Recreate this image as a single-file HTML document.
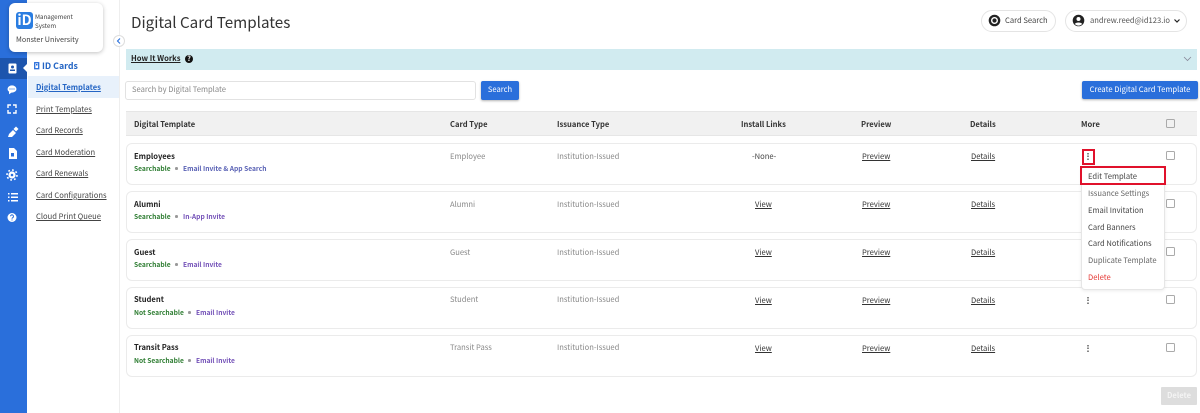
<!DOCTYPE html>
<html><head><meta charset="utf-8">
<style>
html,body{margin:0;padding:0;background:#fff}
#p{position:relative;width:1200px;height:413px;overflow:hidden;background:#fff;font-family:"Noto Sans CJK JP","Liberation Sans",sans-serif;font-size:7.6px;color:#333}
#p div,#p a,#p svg{position:absolute}
.t{white-space:nowrap;line-height:14px}
.nav{left:36px;font-size:7.6px;color:#444;text-decoration:underline}
.row{left:126px;width:1069px;height:40px;border:1px solid #ebebeb;border-radius:6px;background:#fff}
.h{font-weight:bold;color:#333;font-size:7.6px}
.name{left:134px;font-weight:bold;color:#222;font-size:7.6px}
.g{color:#888;font-size:7.6px}
.u{color:#333;text-decoration:underline;font-size:7.6px}
.t.s{font-weight:bold;font-size:6.65px;color:#2e7d32;left:134px;line-height:12px}
.t.i{font-weight:bold;font-size:6.65px;color:#7452b8;line-height:12px}
.d{width:2.5px;height:2.5px;border-radius:50%;background:#999}
.cb{left:1166px;width:7px;height:7px;border:1.2px solid #aaa;border-radius:1.5px;background:#fff}
.m{left:1088px;font-size:7.6px;color:#444}
.v{left:1087px;width:2px;height:7px;background:repeating-linear-gradient(#888 0 1.5px,transparent 1.5px 2.7px)}
</style></head><body><div id="p">

<div style="left:0;top:0;width:27px;height:413px;background:#2a6fdb"></div>
<div style="left:0;top:58px;width:27px;height:21px;background:#1d55ad"></div>
<div style="left:23px;top:63px;width:0;height:0;border:5px solid transparent;border-right:5px solid #fff;border-left:0"></div>
<div style="left:119px;top:0;width:1px;height:413px;background:#eee"></div>
<div style="left:28px;top:76px;width:91px;height:22px;background:#e8f1fb"></div>

<!-- logo card -->
<div style="left:9px;top:3px;width:94px;height:49px;background:#fff;border-radius:6px;box-shadow:0 1px 4px rgba(0,0,0,.25)"></div>
<div style="left:16px;top:12px;width:17px;height:17px;background:#2a7de1;border-radius:3px"></div>
<div class="t" style="left:16px;top:12px;width:17px;height:17px;line-height:17px;text-align:center;color:#fff;font-weight:bold;font-size:14px">iD</div>
<div class="t" style="left:35px;top:12px;font-size:6.2px;line-height:9px;color:#444">Management<br>System</div>
<div class="t" style="left:16px;top:33px;font-size:7.2px;color:#444">Monster University</div>
<div style="left:113px;top:35px;width:10px;height:10px;background:#fff;border:1px solid #ddd;border-radius:50%"></div>
<svg style="left:113px;top:35px" width="12" height="12" viewBox="0 0 12 12"><path d="M7 3.5 4.5 6 7 8.5" fill="none" stroke="#2a6fdb" stroke-width="1.1"/></svg>

<!-- sidebar icons -->
<svg style="left:0;top:58px" width="27" height="180" viewBox="0 0 27 180" fill="#fff">
<rect x="8.5" y="5.5" width="8" height="10" rx="1"/><circle cx="12.5" cy="9" r="1.5" fill="#1d55ad"/><rect x="10" y="11.5" width="5" height="1.5" fill="#1d55ad"/>
<ellipse cx="12" cy="31" rx="4.5" ry="3.6"/><path d="M9 33.5v2.8l3-2z"/><g fill="#2a6fdb"><circle cx="10" cy="31" r=".6"/><circle cx="12" cy="31" r=".6"/><circle cx="14" cy="31" r=".6"/></g>
<path d="M8 50v-3h3M13 47h3v3M16 52v3h-3M11 55H8v-3" fill="none" stroke="#fff" stroke-width="1.4"/>
<path d="M8 79l1-3 4-4 3 3-4 4z"/><path d="M13.5 71l2.500-2.500 2.500 2.500-2.500 2.500z"/>
<path d="M9 90h5l3 3v8H9z"/><rect x="11" y="95" width="3" height="3.500" fill="#2a6fdb"/>
<circle cx="12" cy="117" r="3.600"/><circle cx="12" cy="117" r="5" fill="none" stroke="#fff" stroke-width="1.600" stroke-dasharray="1.800 2.100"/><circle cx="12" cy="117" r="1.300" fill="#2a6fdb"/>
<g><rect x="8" y="135" width="1.500" height="1.500"/><rect x="11" y="135" width="7" height="1.500"/><rect x="8" y="138.500" width="1.500" height="1.500"/><rect x="11" y="138.500" width="7" height="1.500"/><rect x="8" y="142" width="1.500" height="1.500"/><rect x="11" y="142" width="7" height="1.500"/></g>
<circle cx="12" cy="159.500" r="4.500"/><path d="M10.500 158.300a1.500 1.500 0 1 1 2.300 1.300c-.6.4-.8.600-.8 1.100" fill="none" stroke="#2a6fdb" stroke-width="1"/><rect x="11.500" y="161.500" width="1" height="1" fill="#2a6fdb"/>
</svg>

<!-- sidebar text -->
<svg style="left:34px;top:62px" width="6" height="8" viewBox="0 0 6 8"><rect x=".7" y=".7" width="4" height="6" fill="none" stroke="#2a6fdb" stroke-width="1.300"/><rect x="2" y="2" width="1.500" height="1.500" fill="#2a6fdb"/></svg>
<div class="t" style="left:42px;top:59px;font-weight:bold;font-size:8.800px;color:#2465c4">ID Cards</div>
<div class="t nav" style="top:81px;color:#2465c4;font-weight:bold">Digital Templates</div>
<div class="t nav" style="top:103px">Print Templates</div>
<div class="t nav" style="top:124px">Card Records</div>
<div class="t nav" style="top:146px">Card Moderation</div>
<div class="t nav" style="top:167px">Card Renewals</div>
<div class="t nav" style="top:189px">Card Configurations</div>
<div class="t nav" style="top:210px">Cloud Print Queue</div>

<!-- header -->
<div class="t" style="left:131px;top:11px;line-height:22px;font-size:15.200px;color:#333">Digital Card Templates</div>
<div style="left:981px;top:10px;width:73px;height:20px;border:1px solid #e4e4e4;border-radius:11px"></div>
<svg style="left:988px;top:14px" width="13" height="13" viewBox="0 0 13 13"><circle cx="6.500" cy="6.500" r="5.800" fill="#222"/><circle cx="6.500" cy="6.500" r="2.800" fill="none" stroke="#fff" stroke-width="1.400"/></svg>
<div class="t" style="left:1005px;top:14px;font-size:7.600px;color:#444">Card Search</div>
<div style="left:1065px;top:10px;width:120px;height:20px;border:1px solid #e4e4e4;border-radius:11px"></div>
<svg style="left:1072px;top:14px" width="13" height="13" viewBox="0 0 13 13"><circle cx="6.500" cy="6.500" r="5.800" fill="#222"/><circle cx="6.500" cy="5" r="2" fill="#fff"/><path d="M2.800 10c1-2 6.400-2 7.400 0-1 1-2.200 1.600-3.700 1.600S3.800 11 2.800 10z" fill="#fff"/></svg>
<div class="t" style="left:1090px;top:14px;font-size:7.600px;color:#555">andrew.reed@id123.io</div>
<svg style="left:1173px;top:18px" width="8" height="6" viewBox="0 0 8 6"><path d="M1.500 1.500 4 4 6.500 1.500" fill="none" stroke="#222" stroke-width="1.200"/></svg>

<!-- banner -->
<div style="left:126px;top:49px;width:1071px;height:21px;background:#d1ebf0"></div>
<div class="t" style="left:131px;top:52px;font-weight:bold;font-size:7.600px;color:#222;text-decoration:underline">How It Works</div>
<div style="left:185px;top:55px;width:8px;height:8px;background:#111;border-radius:50%;color:#fff;font-size:7px;line-height:8px;text-align:center;font-weight:bold">?</div>
<svg style="left:1183px;top:56px" width="9" height="6" viewBox="0 0 9 6"><path d="M1 1 4.500 4.500 8 1" fill="none" stroke="#889" stroke-width=".8"/></svg>

<!-- search -->
<div style="left:125px;top:81px;width:349px;height:17px;border:1px solid #e2e2e2;border-radius:3px"></div>
<div class="t" style="left:132px;top:83px;font-size:7.600px;color:#888">Search by Digital Template</div>
<div class="t" style="left:481px;top:81px;width:38px;height:19px;line-height:18px;background:#2a6fdb;border-radius:2px;color:#fff;text-align:center;font-size:7.600px;box-shadow:0 1px 2px rgba(0,0,0,.3)">Search</div>
<div class="t" style="left:1082px;top:81px;width:116px;height:18px;line-height:18px;background:#2a6fdb;border-radius:2px;color:#fff;text-align:center;font-size:7.600px;box-shadow:0 1px 2px rgba(0,0,0,.3)">Create Digital Card Template</div>

<!-- table header -->
<div style="left:126px;top:111px;width:1071px;height:25px;background:#f1f1f1;border-top:1px solid #e6e6e6;border-bottom:1px solid #e6e6e6;box-sizing:border-box"></div>
<div class="t h" style="left:134px;top:118px">Digital Template</div>
<div class="t h" style="left:450px;top:118px">Card Type</div>
<div class="t h" style="left:557px;top:118px">Issuance Type</div>
<div class="t h" style="left:741px;top:118px">Install Links</div>
<div class="t h" style="left:861px;top:118px">Preview</div>
<div class="t h" style="left:970px;top:118px">Details</div>
<div class="t h" style="left:1081px;top:118px">More</div>
<div class="cb" style="top:119px;left:1166px;background:#f1f1f1"></div>

<!-- rows -->
<div class="row" style="top:143px"></div>
<div class="row" style="top:191px"></div>
<div class="row" style="top:239px"></div>
<div class="row" style="top:287px"></div>
<div class="row" style="top:335px"></div>

<div class="t name" style="top:150px">Employees</div>
<div class="t s" style="top:162px">Searchable</div><div class="d" style="left:175px;top:167px"></div><div class="t i" style="left:183px;top:162px;color:#5a62b5">Email Invite &amp; App Search</div>
<div class="t g" style="left:450px;top:150px">Employee</div>
<div class="t g" style="left:557px;top:150px">Institution-Issued</div>
<div class="t" style="left:752px;top:150px;color:#444;font-size:7.600px">-None-</div>
<div class="t u" style="left:862px;top:150px">Preview</div>
<div class="t u" style="left:971px;top:150px">Details</div>
<div class="v" style="top:153px"></div>
<div class="cb" style="top:151px"></div>

<div class="t name" style="top:198px">Alumni</div>
<div class="t s" style="top:210px">Searchable</div><div class="d" style="left:175px;top:215px"></div><div class="t i" style="left:183px;top:210px">In-App Invite</div>
<div class="t g" style="left:450px;top:198px">Alumni</div>
<div class="t g" style="left:557px;top:198px">Institution-Issued</div>
<div class="t u" style="left:755px;top:198px">View</div>
<div class="t u" style="left:862px;top:198px">Preview</div>
<div class="t u" style="left:971px;top:198px">Details</div>
<div class="cb" style="top:199px"></div>

<div class="t name" style="top:246px">Guest</div>
<div class="t s" style="top:258px">Searchable</div><div class="d" style="left:175px;top:263px"></div><div class="t i" style="left:183px;top:258px">Email Invite</div>
<div class="t g" style="left:450px;top:246px">Guest</div>
<div class="t g" style="left:557px;top:246px">Institution-Issued</div>
<div class="t u" style="left:755px;top:246px">View</div>
<div class="t u" style="left:862px;top:246px">Preview</div>
<div class="t u" style="left:971px;top:246px">Details</div>
<div class="cb" style="top:247px"></div>

<div class="t name" style="top:293px">Student</div>
<div class="t s" style="top:306px">Not Searchable</div><div class="d" style="left:188px;top:311px"></div><div class="t i" style="left:196px;top:306px">Email Invite</div>
<div class="t g" style="left:450px;top:293px">Student</div>
<div class="t g" style="left:557px;top:293px">Institution-Issued</div>
<div class="t u" style="left:755px;top:294px">View</div>
<div class="t u" style="left:862px;top:294px">Preview</div>
<div class="t u" style="left:971px;top:294px">Details</div>
<div class="v" style="top:297px"></div>
<div class="cb" style="top:295px"></div>

<div class="t name" style="top:341px">Transit Pass</div>
<div class="t s" style="top:354px">Not Searchable</div><div class="d" style="left:188px;top:359px"></div><div class="t i" style="left:196px;top:354px">Email Invite</div>
<div class="t g" style="left:450px;top:341px">Transit Pass</div>
<div class="t g" style="left:557px;top:341px">Institution-Issued</div>
<div class="t u" style="left:755px;top:342px">View</div>
<div class="t u" style="left:862px;top:342px">Preview</div>
<div class="t u" style="left:971px;top:342px">Details</div>
<div class="v" style="top:345px"></div>
<div class="cb" style="top:343px"></div>

<!-- dropdown -->
<div style="left:1081px;top:166px;width:82px;height:122px;background:#fff;border:1px solid #e6e6e6;border-radius:4px;box-shadow:0 1px 3px rgba(0,0,0,.08)"></div>
<div class="t m" style="top:170px">Edit Template</div>
<div class="t m" style="top:187px;color:#666">Issuance Settings</div>
<div class="t m" style="top:204px">Email Invitation</div>
<div class="t m" style="top:221px">Card Banners</div>
<div class="t m" style="top:237px">Card Notifications</div>
<div class="t m" style="top:254px;color:#666">Duplicate Template</div>
<div class="t m" style="top:271px;color:#e53935">Delete</div>

<!-- red highlights -->
<div style="left:1082px;top:149px;width:9px;height:12px;border:2px solid #e0112b"></div>
<div style="left:1080px;top:166px;width:82px;height:15px;border:2px solid #e0112b"></div>

<!-- bottom delete -->
<div class="t" style="left:1161px;top:387px;width:36px;height:18px;line-height:18px;background:#ddd;border-radius:1px;color:#f4f4f4;text-align:center;font-weight:bold;font-size:7.600px">Delete</div>

</div></body></html>
